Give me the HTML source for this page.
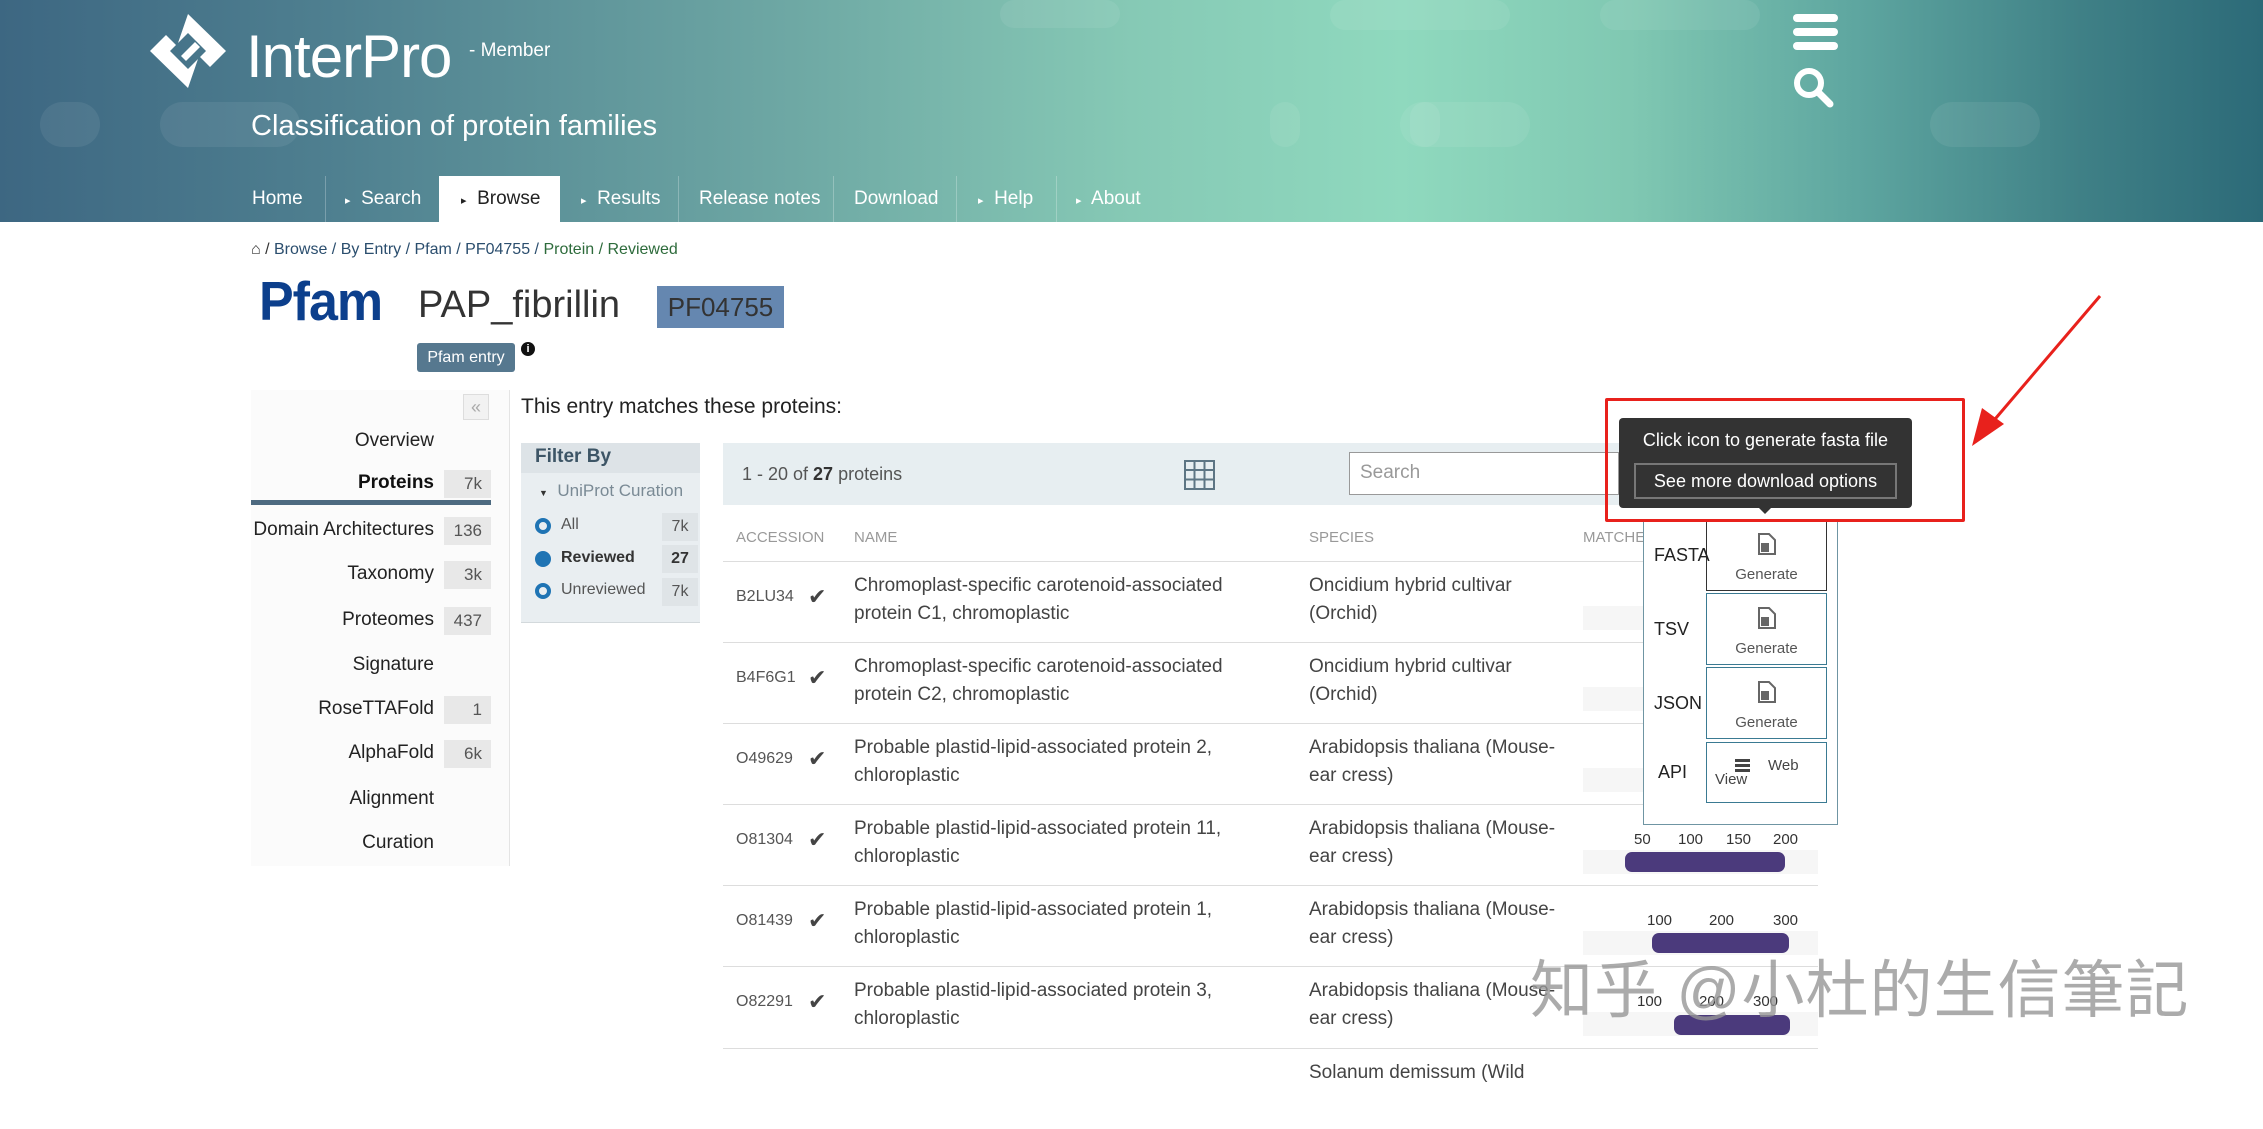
<!DOCTYPE html>
<html><head><meta charset="utf-8"><style>
*{margin:0;padding:0;box-sizing:border-box}
body{width:2263px;height:1071px;overflow:hidden;background:#fff;font-family:"Liberation Sans",sans-serif;color:#333;position:relative}
.a{position:absolute;white-space:nowrap}
#hdr{position:absolute;left:0;top:0;width:2263px;height:222px;background:linear-gradient(to right,#3d6782 0%,#4f8090 15%,#6ea8a4 35%,#86c9b5 50%,#8fd9be 62%,#80c8b2 72%,#5ea6a0 82%,#3f8086 92%,#2c6a78 100%)}
.blob{position:absolute;background:rgba(255,255,255,.07);border-radius:40px}
.nav{position:absolute;top:176px;height:46px;color:#fff;font-size:19px;line-height:46px;padding:0 0}
.sep{position:absolute;top:176px;width:1px;height:46px;background:rgba(255,255,255,.25)}
.side{position:absolute;font-size:19px;color:#222;text-align:right;width:190px;left:244px}
.badge{position:absolute;left:444px;width:47px;height:28px;background:#e8e8e8;color:#555;font-size:17px;text-align:right;padding-right:9px;line-height:28px}
.row{position:absolute;left:723px;width:1095px;border-top:1px solid #ddd;height:81px}
.t{position:absolute;font-size:19px;color:#444;line-height:28px}
.acc{position:absolute;left:13px;top:26px;font-size:16px;color:#555}
.chk{position:absolute;left:85px;top:22px;font-size:22px;color:#444}
.trk{position:absolute;left:860px;width:235px;height:24px;background:#f6f6f6}
.bar{position:absolute;height:20px;background:#4b3a7c;border-radius:7px}
.num{position:absolute;font-size:15px;color:#333}
.box{position:absolute;left:1706px;width:121px;border:1.5px solid #3a7a92;background:#fff}
.lbl{position:absolute;left:1654px;font-size:18px;color:#222}
.gen{position:absolute;width:100%;text-align:center;font-size:15px;color:#555}
</style></head><body>
<div id="hdr">
<div class="blob" style="left:1000px;top:0;width:120px;height:28px"></div>
<div class="blob" style="left:1330px;top:0;width:180px;height:30px"></div>
<div class="blob" style="left:1600px;top:0;width:160px;height:30px"></div>
<div class="blob" style="left:1400px;top:102px;width:130px;height:45px"></div>
<div class="blob" style="left:1270px;top:102px;width:30px;height:45px"></div>
<div class="blob" style="left:1410px;top:102px;width:30px;height:45px"></div>
<div class="blob" style="left:1930px;top:102px;width:110px;height:45px"></div>
<div class="blob" style="left:40px;top:102px;width:60px;height:45px"></div>
<div class="blob" style="left:160px;top:102px;width:140px;height:45px"></div>
</div>
<svg class="a" style="left:148px;top:12px" width="80" height="78" viewBox="0 0 80 78"><g fill="#fff"><path d="M40 2 L78 39 L62 55 L52 45 L58 39 L40 21 L30 31 Z"/><path d="M40 76 L2 39 L18 23 L28 33 L22 39 L40 57 L50 47 Z"/><path d="M33 44 L47 30 L52 35 L38 49 Z"/></g></svg>
<div class="a" style="left:246px;top:22px;font-size:60px;color:#fff;letter-spacing:-1px">InterPro</div>
<div class="a" style="left:469px;top:40px;font-size:19px;color:#fff">- Member</div>
<div class="a" style="left:251px;top:110px;font-size:29px;color:#fff;font-weight:300">Classification of protein families</div>
<div class="a" style="left:1793px;top:14px;width:45px;height:8px;background:#fff;border-radius:4px"></div>
<div class="a" style="left:1793px;top:28px;width:45px;height:8px;background:#fff;border-radius:4px"></div>
<div class="a" style="left:1793px;top:42px;width:45px;height:8px;background:#fff;border-radius:4px"></div>
<svg class="a" style="left:1792px;top:66px" width="44" height="44" viewBox="0 0 44 44"><circle cx="17" cy="17" r="12" stroke="#fff" stroke-width="6" fill="none"/><path d="M26 26 L38 38" stroke="#fff" stroke-width="7" stroke-linecap="round"/></svg>
<div class="nav" style="left:252px">Home</div>
<div class="sep" style="left:325px"></div>
<div class="nav" style="left:345px"><span style="font-size:11px">▸</span>&nbsp; Search</div>
<div class="a" style="left:439px;top:176px;width:121px;height:46px;background:#fff"></div>
<div class="nav" style="left:461px;color:#222"><span style="font-size:11px">▸</span>&nbsp; Browse</div>
<div class="nav" style="left:581px"><span style="font-size:11px">▸</span>&nbsp; Results</div>
<div class="sep" style="left:678px"></div>
<div class="nav" style="left:699px">Release notes</div>
<div class="sep" style="left:833px"></div>
<div class="nav" style="left:854px">Download</div>
<div class="sep" style="left:956px"></div>
<div class="nav" style="left:978px"><span style="font-size:11px">▸</span>&nbsp; Help</div>
<div class="sep" style="left:1056px"></div>
<div class="nav" style="left:1076px"><span style="font-size:11px">▸</span>&nbsp; About</div>

<div class="a" style="left:251px;top:241px;font-size:16px;color:#333">&#8962; / <span style="color:#2b4e6e">Browse / By Entry / Pfam / PF04755 /</span> <span style="color:#2d6b3b">Protein / Reviewed</span></div>
<div class="a" style="left:259px;top:272px;font-size:52px;font-weight:bold;color:#0c3f8c;letter-spacing:-1px;transform:scaleY(1.05)">Pfam</div>
<div class="a" style="left:418px;top:284px;font-size:38px;color:#333">PAP_fibrillin</div>
<div class="a" style="left:657px;top:286px;width:127px;height:42px;background:#6587b0;color:#333;font-size:26px;text-align:center;line-height:42px">PF04755</div>
<div class="a" style="left:417px;top:343px;width:98px;height:29px;background:#56788f;color:#fff;font-size:16px;text-align:center;line-height:29px;border-radius:3px">Pfam entry</div>
<div class="a" style="left:521px;top:342px;width:14px;height:14px;border-radius:7px;background:#111;color:#fff;font-size:11px;text-align:center;line-height:14px;font-weight:bold">i</div>

<div class="a" style="left:251px;top:390px;width:258px;height:476px;background:#fbfbfb"></div>
<div class="a" style="left:509px;top:390px;width:1px;height:476px;background:#e4e4e4"></div>
<div class="a" style="left:463px;top:394px;width:26px;height:26px;border:1px solid #ddd;background:#f2f2f2;color:#aaa;font-size:18px;text-align:center;line-height:24px">«</div>
<div class="side" style="top:430px">Overview</div>
<div class="side" style="top:472px;font-weight:bold;color:#111">Proteins</div><div class="badge" style="top:470px">7k</div>
<div class="a" style="left:251px;top:500px;width:240px;height:5px;background:#4d6a80"></div>
<div class="side" style="top:519px">Domain Architectures</div><div class="badge" style="top:517px">136</div>
<div class="side" style="top:563px">Taxonomy</div><div class="badge" style="top:561px">3k</div>
<div class="side" style="top:609px">Proteomes</div><div class="badge" style="top:607px">437</div>
<div class="side" style="top:654px">Signature</div>
<div class="side" style="top:698px">RoseTTAFold</div><div class="badge" style="top:696px">1</div>
<div class="side" style="top:742px">AlphaFold</div><div class="badge" style="top:740px">6k</div>
<div class="side" style="top:788px">Alignment</div>
<div class="side" style="top:832px">Curation</div>

<div class="a" style="left:521px;top:395px;font-size:21px;color:#222">This entry matches these proteins:</div>
<div class="a" style="left:521px;top:443px;width:179px;height:180px;background:#e9eef1;border-bottom:1px solid #d3d9dc"></div>
<div class="a" style="left:521px;top:443px;width:179px;height:30px;background:#dde3e7"></div>
<div class="a" style="left:535px;top:446px;font-size:19px;font-weight:bold;color:#3d5566">Filter By</div>
<div class="a" style="left:539px;top:481px;font-size:17px;color:#7a8a95"><span style="font-size:9px;color:#333">▼</span>&nbsp; UniProt Curation</div>
<div class="a" style="left:535px;top:518px;width:16px;height:16px;border-radius:8px;border:4px solid #1f74b4"></div>
<div class="a" style="left:561px;top:516px;font-size:16px;color:#555">All</div>
<div class="a" style="left:662px;top:513px;width:36px;height:28px;background:#dfe4e7;font-size:16px;color:#555;text-align:center;line-height:28px">7k</div>
<div class="a" style="left:535px;top:551px;width:16px;height:16px;border-radius:8px;background:#1f74b4"></div>
<div class="a" style="left:561px;top:549px;font-size:16px;color:#333;font-weight:bold">Reviewed</div>
<div class="a" style="left:662px;top:545px;width:36px;height:28px;background:#dfe4e7;font-size:16px;color:#333;font-weight:bold;text-align:center;line-height:28px">27</div>
<div class="a" style="left:535px;top:583px;width:16px;height:16px;border-radius:8px;border:4px solid #1f74b4"></div>
<div class="a" style="left:561px;top:581px;font-size:16px;color:#555">Unreviewed</div>
<div class="a" style="left:662px;top:578px;width:36px;height:28px;background:#dfe4e7;font-size:16px;color:#555;text-align:center;line-height:28px">7k</div>

<div class="a" style="left:723px;top:443px;width:1095px;height:62px;background:#e7eef1"></div>
<div class="a" style="left:742px;top:464px;font-size:18px;color:#555">1 - 20 of <b style="color:#333">27</b> proteins</div>
<svg class="a" style="left:1184px;top:460px" width="31" height="30" viewBox="0 0 31 30"><rect x="1" y="1" width="29" height="28" fill="none" stroke="#5d7584" stroke-width="2"/><path d="M1 10H30M1 19.5H30M10.5 1V29M20.5 1V29" stroke="#5d7584" stroke-width="2"/></svg>
<div class="a" style="left:1349px;top:452px;width:270px;height:43px;border:1px solid #999;background:#fff;font-size:19px;color:#999;padding:9px 10px">Search</div>
<div class="a" style="left:736px;top:529px;font-size:15px;color:#999">ACCESSION</div>
<div class="a" style="left:854px;top:529px;font-size:15px;color:#999">NAME</div>
<div class="a" style="left:1309px;top:529px;font-size:15px;color:#999">SPECIES</div>
<div class="a" style="left:1583px;top:529px;font-size:15px;color:#999">MATCHES</div>

<div class="row" style="top:561px"><div class="acc">B2LU34</div><div class="chk">✔</div><div class="t" style="left:131px;top:10px">Chromoplast-specific carotenoid-associated<br>protein C1, chromoplastic</div><div class="t" style="left:586px;top:10px">Oncidium hybrid cultivar<br>(Orchid)</div><div class="trk" style="top:44px"></div></div>
<div class="row" style="top:642px"><div class="acc">B4F6G1</div><div class="chk">✔</div><div class="t" style="left:131px;top:10px">Chromoplast-specific carotenoid-associated<br>protein C2, chromoplastic</div><div class="t" style="left:586px;top:10px">Oncidium hybrid cultivar<br>(Orchid)</div><div class="trk" style="top:44px"></div></div>
<div class="row" style="top:723px"><div class="acc">O49629</div><div class="chk">✔</div><div class="t" style="left:131px;top:10px">Probable plastid-lipid-associated protein 2,<br>chloroplastic</div><div class="t" style="left:586px;top:10px">Arabidopsis thaliana (Mouse-<br>ear cress)</div><div class="trk" style="top:44px"></div></div>
<div class="row" style="top:804px"><div class="acc">O81304</div><div class="chk">✔</div><div class="t" style="left:131px;top:10px">Probable plastid-lipid-associated protein 11,<br>chloroplastic</div><div class="t" style="left:586px;top:10px">Arabidopsis thaliana (Mouse-<br>ear cress)</div><div class="trk" style="top:45px"></div><div class="num" style="left:911px;top:26px">50</div><div class="num" style="left:955px;top:26px">100</div><div class="num" style="left:1003px;top:26px">150</div><div class="num" style="left:1050px;top:26px">200</div><div class="bar" style="left:902px;width:160px;top:47px"></div></div>
<div class="row" style="top:885px"><div class="acc">O81439</div><div class="chk">✔</div><div class="t" style="left:131px;top:10px">Probable plastid-lipid-associated protein 1,<br>chloroplastic</div><div class="t" style="left:586px;top:10px">Arabidopsis thaliana (Mouse-<br>ear cress)</div><div class="trk" style="top:45px"></div><div class="num" style="left:924px;top:26px">100</div><div class="num" style="left:986px;top:26px">200</div><div class="num" style="left:1050px;top:26px">300</div><div class="bar" style="left:929px;width:137px;top:47px"></div></div>
<div class="row" style="top:966px"><div class="acc">O82291</div><div class="chk">✔</div><div class="t" style="left:131px;top:10px">Probable plastid-lipid-associated protein 3,<br>chloroplastic</div><div class="t" style="left:586px;top:10px">Arabidopsis thaliana (Mouse-<br>ear cress)</div><div class="trk" style="top:45px"></div><div class="num" style="left:914px;top:26px">100</div><div class="num" style="left:976px;top:26px">200</div><div class="num" style="left:1030px;top:26px">300</div><div class="bar" style="left:951px;width:116px;top:48px"></div></div>
<div class="row" style="top:1048px"><div class="t" style="left:586px;top:10px">Solanum demissum (Wild</div></div>

<div class="a" style="left:1643px;top:519px;width:195px;height:306px;border:1px solid #6f95a3;background:#fff"></div>
<div class="box" style="top:519px;height:72px;border-color:#333"><svg class="a" style="left:49px;top:12px" width="22" height="24" viewBox="0 0 22 24"><path d="M3 2H13L19 8V22H3Z" fill="none" stroke="#666" stroke-width="2"/><rect x="5" y="11" width="8" height="9" fill="#666"/></svg><div class="gen" style="top:46px">Generate</div></div>
<div class="box" style="top:593px;height:72px"><svg class="a" style="left:49px;top:12px" width="22" height="24" viewBox="0 0 22 24"><path d="M3 2H13L19 8V22H3Z" fill="none" stroke="#666" stroke-width="2"/><rect x="5" y="11" width="8" height="9" fill="#666"/></svg><div class="gen" style="top:46px">Generate</div></div>
<div class="box" style="top:667px;height:72px"><svg class="a" style="left:49px;top:12px" width="22" height="24" viewBox="0 0 22 24"><path d="M3 2H13L19 8V22H3Z" fill="none" stroke="#666" stroke-width="2"/><rect x="5" y="11" width="8" height="9" fill="#666"/></svg><div class="gen" style="top:46px">Generate</div></div>
<div class="box" style="top:742px;height:61px"><div class="a" style="left:28px;top:16px;width:15px;height:13px;background:repeating-linear-gradient(#444 0 3px,#fff 3px 5px)"></div><div class="a" style="left:61px;top:14px;font-size:15px;color:#444">Web</div><div class="a" style="left:8px;top:28px;font-size:15px;color:#444">View</div></div>
<div class="lbl" style="top:545px">FASTA</div>
<div class="lbl" style="top:619px">TSV</div>
<div class="lbl" style="top:693px">JSON</div>
<div class="lbl" style="top:762px;left:1658px">API</div>

<div class="a" style="left:1619px;top:418px;width:293px;height:90px;background:#333;border-radius:4px"></div>
<div class="a" style="left:1757px;top:506px;width:0;height:0;border-left:8px solid transparent;border-right:8px solid transparent;border-top:8px solid #333"></div>
<div class="a" style="left:1619px;top:430px;width:293px;text-align:center;font-size:18px;color:#fff">Click icon to generate fasta file</div>
<div class="a" style="left:1634px;top:463px;width:263px;height:36px;border:2px solid #777;text-align:center;line-height:32px;font-size:18px;color:#fff">See more download options</div>
<div class="a" style="left:1605px;top:398px;width:360px;height:124px;border:3px solid #e8211c;border-radius:2px"></div>
<svg class="a" style="left:1960px;top:290px" width="150" height="160" viewBox="0 0 150 160"><path d="M140 6 L30 135" stroke="#e8211c" stroke-width="3"/><path d="M12 156 L22 118 L44 134 Z" fill="#e8211c"/></svg>

<div class="a" style="left:1530px;top:940px;font-size:63px;color:rgba(150,150,150,.8);font-family:'Liberation Sans','Noto Sans CJK SC',sans-serif;letter-spacing:1px">知乎 @小杜的生信筆記</div>
</body></html>
